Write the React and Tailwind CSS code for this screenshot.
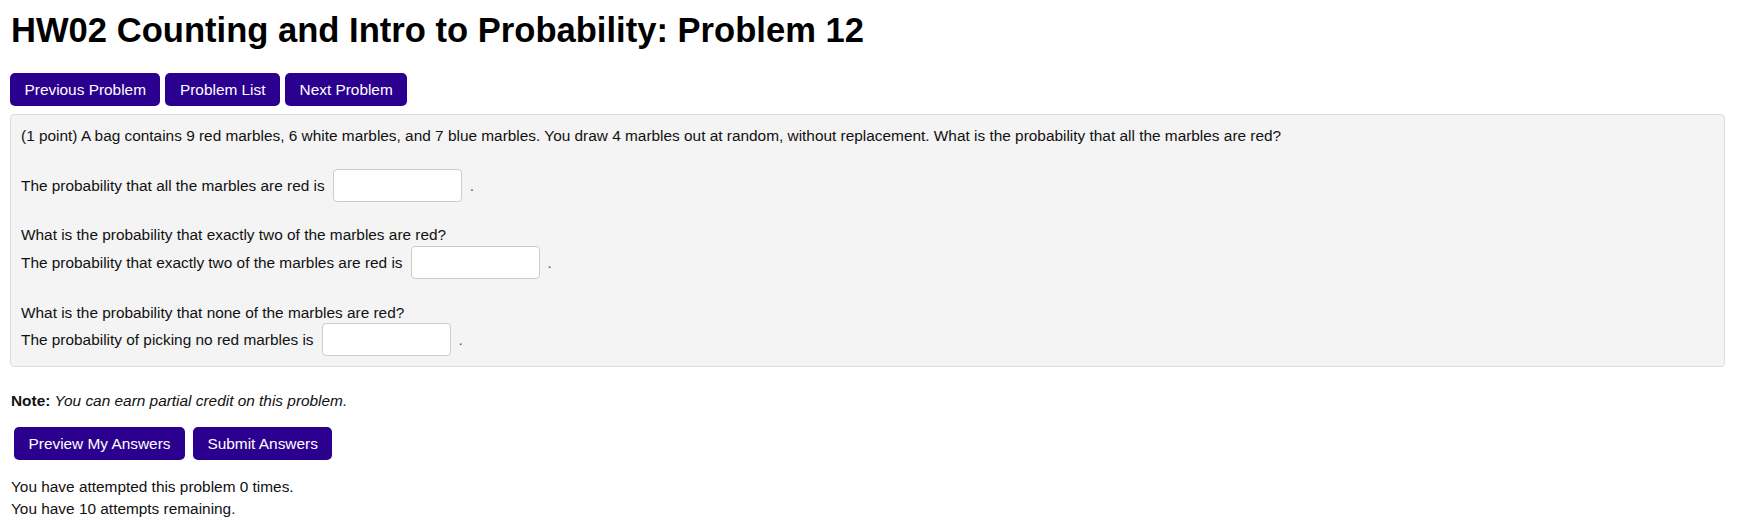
const font = { fontFamily: '"Liberation Sans", Arial, sans-serif' }

function NavButton({ children }) {
  return (
    <button className="h-[33px] px-[14.5px] rounded-[5px] bg-[#2b008f] text-white text-[15.4px] leading-none">
      {children}
    </button>
  )
}

function AnswerBox() {
  return (
    <input
      type="text"
      className="w-[129px] h-[33px] mx-[8px] rounded-[4px] border border-[#cccccc] bg-white"
    />
  )
}

function AnswerRow({ label }) {
  return (
    <div className="flex items-center">
      <span>{label}</span>
      <AnswerBox />
      <span className="text-[#555]">.</span>
    </div>
  )
}

export default function App() {
  return (
    <div className="bg-white text-[#111] pl-[10px] pr-[22px] pb-6" style={font}>
      <h1 className="pt-[10px] pl-[1px] text-[34.6px] leading-[41.4px] font-bold text-black">
        HW02 Counting and Intro to Probability: Problem 12
      </h1>

      <div className="flex gap-[5px] mt-[22px]">
        <NavButton>Previous Problem</NavButton>
        <NavButton>Problem List</NavButton>
        <NavButton>Next Problem</NavButton>
      </div>

      <div className="mt-[8px] rounded-[4px] border border-[#dcdcdc] bg-[#f4f4f4] pt-[11px] pb-[10px] px-[10px] text-[15.4px] leading-[20px]">
        <p>
          (1 point) A bag contains 9 red marbles, 6 white marbles, and 7 blue marbles. You draw 4 marbles out at random, without replacement. What is the probability that all the marbles are red?
        </p>

        <div className="mt-[23px]">
          <AnswerRow label="The probability that all the marbles are red is" />
        </div>

        <p className="mt-[23px]">What is the probability that exactly two of the marbles are red?</p>
        <div className="mt-[1px]">
          <AnswerRow label="The probability that exactly two of the marbles are red is" />
        </div>

        <p className="mt-[24px]">What is the probability that none of the marbles are red?</p>
        <AnswerRow label="The probability of picking no red marbles is" />
      </div>

      <p className="mt-[24px] pl-[1px] text-[15.4px] leading-[20px]">
        <span className="font-bold">Note: </span>
        <i>You can earn partial credit on this problem.</i>
      </p>

      <div className="flex gap-[8px] mt-[16px] pl-[4px]">
        <NavButton>Preview My Answers</NavButton>
        <NavButton>Submit Answers</NavButton>
      </div>

      <div className="mt-[16px] pl-[1px] text-[15.4px] leading-[22px]">
        <p>You have attempted this problem 0 times.</p>
        <p>You have 10 attempts remaining.</p>
      </div>
    </div>
  )
}
